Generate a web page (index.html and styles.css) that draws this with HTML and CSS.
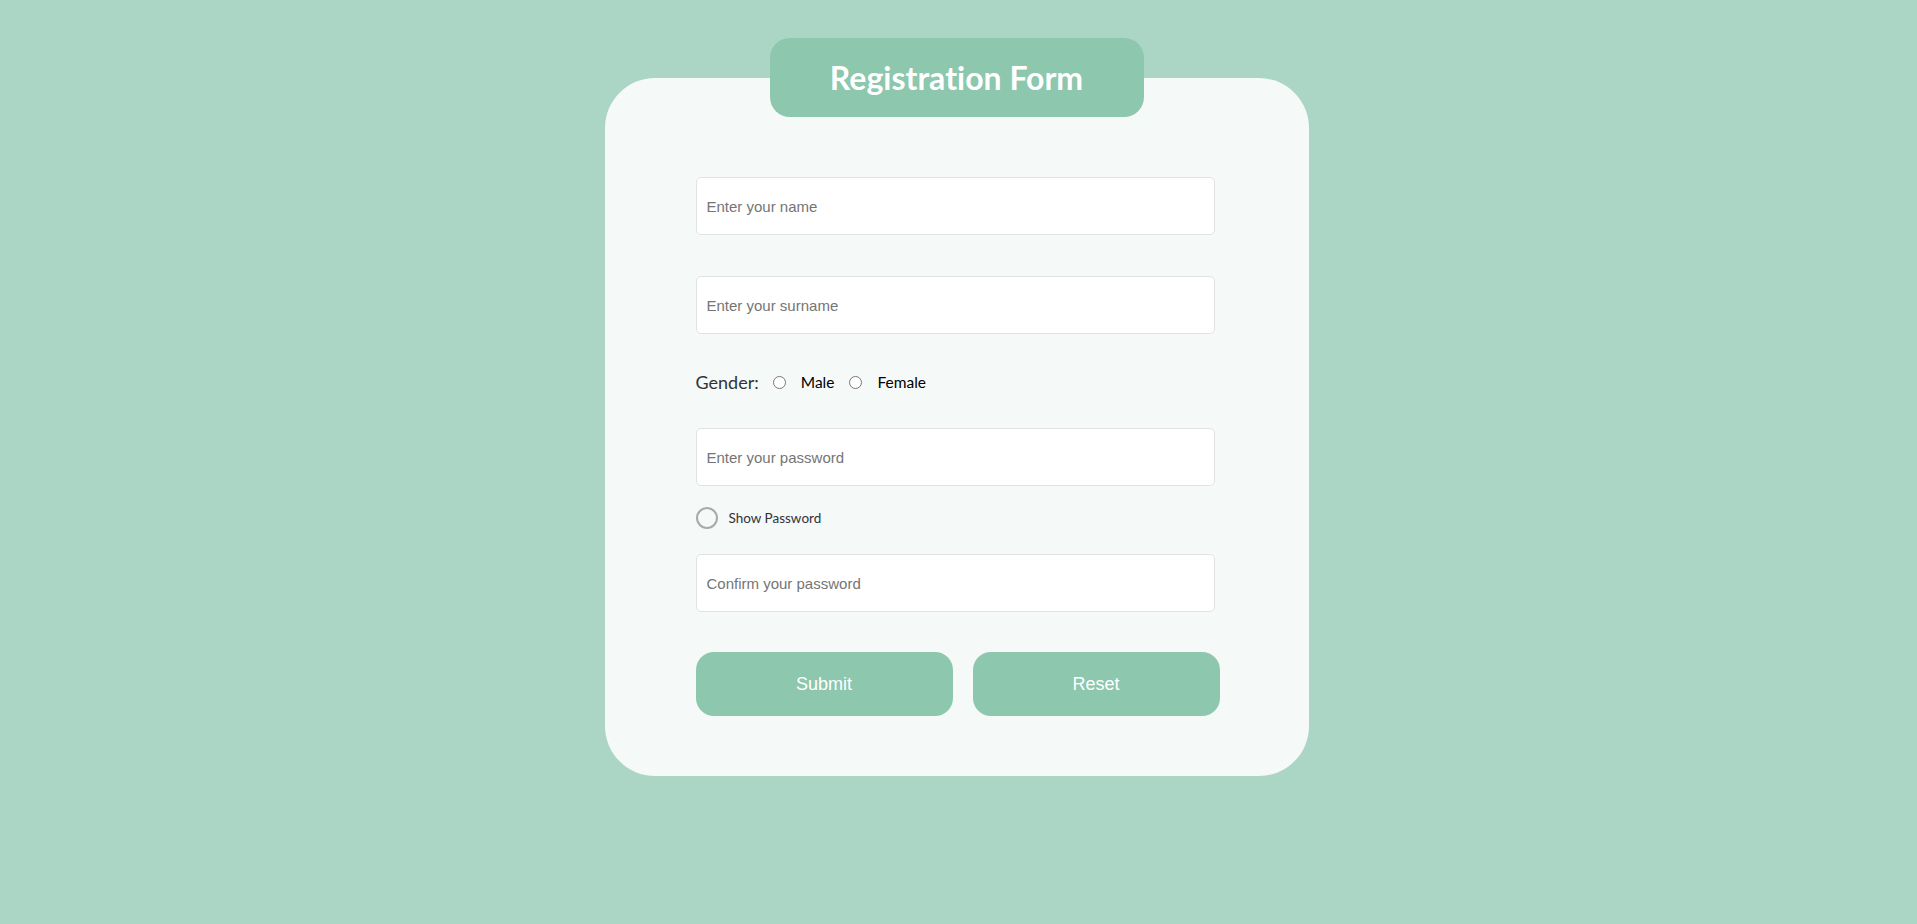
FILE: index.html
```html
<!DOCTYPE html>
<html lang="en">
<head>
<meta charset="utf-8">
<title>Registration Form</title>
<link rel="stylesheet" href="styles.css">
</head>
<body>
  <main class="page">
    <form class="card">
      <h1 class="title">Registration Form</h1>
      <div class="fields">
        <input class="field" type="text" placeholder="Enter your name">
        <input class="field field-surname" type="text" placeholder="Enter your surname">
        <div class="gender">
          <span class="gender-label">Gender:</span>
          <input class="radio" type="radio" name="gender" id="male">
          <label class="radio-label" for="male">Male</label>
          <input class="radio" type="radio" name="gender" id="female">
          <label class="radio-label" for="female">Female</label>
        </div>
        <input class="field field-password" type="password" placeholder="Enter your password">
        <div class="show">
          <input class="show-toggle" type="checkbox" id="show">
          <label class="show-label" for="show">Show Password</label>
        </div>
        <input class="field field-confirm" type="password" placeholder="Confirm your password">
        <div class="actions">
          <button class="btn btn-submit" type="submit">Submit</button>
          <button class="btn btn-reset" type="reset">Reset</button>
        </div>
      </div>
    </form>
  </main>
</body>
</html>
```

FILE: styles.css
```css
* {
  box-sizing: border-box;
}

html, body {
  margin: 0;
  padding: 0;
}

body {
  background: #abd6c6;
  min-height: 100vh;
  font-family: "Liberation Sans", Arial, sans-serif;
}

.page {
  padding-top: 78px;
}

.card {
  position: relative;
  width: 704px;
  margin: 0 0 0 calc(50% - 354px);
  background: #f5f9f8;
  border-radius: 50px;
  padding: 99px 0 60px 91px;
}

.title {
  position: absolute;
  top: -40px;
  left: 50%;
  transform: translateX(-50%);
  width: 374px;
  height: 79px;
  margin: 0;
  border-radius: 20px;
  background: #8cc7ae;
  color: #ffffff;
  font-family: "Lato", "Open Sans", sans-serif;
  font-weight: 700;
  font-size: 32px;
  font-variant-ligatures: none;
  display: flex;
  align-items: center;
  justify-content: center;
}

.fields {
  display: flex;
  flex-direction: column;
  width: 524px;
}

.field {
  width: 519px;
  height: 58px;
  border: 1px solid #e1e3e2;
  border-radius: 5px;
  background: #ffffff;
  padding: 0 10px;
  font-family: "Liberation Sans", Arial, sans-serif;
  font-size: 15px;
  color: #333;
  outline: none;
}

.field::placeholder {
  color: #757575;
}

.field-surname {
  margin-top: 41px;
}

.gender {
  display: flex;
  align-items: center;
  height: 24px;
  margin-top: 36px;
  font-family: "Lato", "Open Sans", sans-serif;
}

.gender-label {
  font-size: 18px;
  color: #333333;
}

.radio {
  width: 13px;
  height: 13px;
  margin: 0 15px 0 14px;
}

.radio-label {
  font-size: 15.5px;
  color: #000000;
}

.radio-label + .radio {
  margin-left: 15px;
}

.field-password {
  margin-top: 34px;
}

.show {
  display: flex;
  align-items: center;
  height: 22px;
  margin-top: 21px;
  font-family: "Lato", "Open Sans", sans-serif;
}

.show-toggle {
  appearance: none;
  -webkit-appearance: none;
  width: 22px;
  height: 22px;
  margin: 0;
  border: 2px solid #a9a9a9;
  border-radius: 50%;
  background: transparent;
}

.show-label {
  margin-left: 11px;
  font-size: 13.5px;
  color: #333333;
}

.field-confirm {
  margin-top: 25px;
}

.actions {
  display: flex;
  gap: 20px;
  margin-top: 40px;
}

.btn {
  height: 64px;
  border: none;
  border-radius: 18px;
  background: #8cc7ae;
  color: #ffffff;
  font-family: "Liberation Sans", Arial, sans-serif;
  font-size: 18px;
  cursor: pointer;
}

.btn-submit {
  width: 257px;
}

.btn-reset {
  width: 247px;
}
```
